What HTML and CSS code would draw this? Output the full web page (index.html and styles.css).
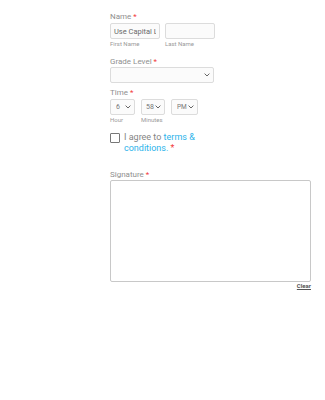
FILE: index.html
```html
<!DOCTYPE html>
<html lang="en">
<head>
    <meta charset="UTF-8">
    <meta name="viewport" content="width=device-width, initial-scale=1.0">
    <title>Form</title>
    <link rel="stylesheet" href="styles.css">
</head>
<body>
    <form class="form">
        <div class="field field-name">
            <label class="label">Name <span class="req">*</span></label>
            <div class="row">
                <div class="sub">
                    <input type="text" class="input input-half" value="Use Capital Letters">
                    <span class="sublabel">First Name</span>
                </div>
                <div class="sub">
                    <input type="text" class="input input-half">
                    <span class="sublabel">Last Name</span>
                </div>
            </div>
        </div>

        <div class="field field-grade">
            <label class="label">Grade Level <span class="req">*</span></label>
            <select class="select select-wide"><option></option></select>
        </div>

        <div class="field field-time">
            <label class="label">Time <span class="req">*</span></label>
            <div class="row time-row">
                <div class="sub">
                    <select class="select select-hour"><option>6</option></select>
                    <span class="sublabel">Hour</span>
                </div>
                <div class="sub">
                    <select class="select select-min"><option>58</option></select>
                    <span class="sublabel">Minutes</span>
                </div>
                <div class="sub">
                    <select class="select select-ampm"><option>PM</option></select>
                </div>
            </div>
        </div>

        <div class="field agree">
            <span class="checkbox"></span>
            <p class="agree-text">I agree to <a href="#" class="link">terms &amp;</a><br><a href="#" class="link">conditions.</a> <span class="req">*</span></p>
        </div>

        <div class="field">
            <label class="label">Signature <span class="req">*</span></label>
            <div class="signature"></div>
            <div class="clear-row"><a href="#" class="clear">Clear</a></div>
        </div>
    </form>
</body>
</html>
```

FILE: styles.css
```css
* {
    margin: 0;
    padding: 0;
    box-sizing: border-box;
    font-family: Roboto, 'Liberation Sans', Arial, sans-serif;
}

body {
    background-color: #fff;
}

.form {
    width: 201px;
    margin-left: 110px;
    padding-top: 12px;
}

.field-name {
    margin-bottom: 9px;
}

.field-grade {
    margin-bottom: 5px;
}

.field-time {
    margin-bottom: 8px;
}

.label {
    display: block;
    font-size: 8px;
    line-height: 10px;
    font-weight: 400;
    color: #8f8f8f;
}

.req {
    color: #f23a3c;
}

.row {
    display: flex;
    gap: 5px;
    margin-top: 1px;
}

.sub {
    display: flex;
    flex-direction: column;
}

.input {
    display: block;
    height: 16px;
    border: 1px solid #dcdcdc;
    border-radius: 2px;
    background-color: #fbfbfb;
    font-size: 7.5px;
    font-weight: 400;
    color: #6a6a6a;
    padding: 0 3px;
}

.input-half {
    width: 50px;
}

.sublabel {
    font-size: 6px;
    line-height: 8px;
    color: #9a9a9a;
    margin-top: 1px;
}

.select {
    display: block;
    appearance: none;
    height: 16px;
    border: 1px solid #dcdcdc;
    border-radius: 2px;
    background-color: #fbfbfb;
    font-size: 7px;
    color: #777;
    padding: 0 3px;
    background-image: url("data:image/svg+xml;utf8,<svg xmlns='http://www.w3.org/2000/svg' width='6' height='4' viewBox='0 0 6 4'><path d='M0.6 0.6 L3 3 L5.4 0.6' fill='none' stroke='%23666' stroke-width='1'/></svg>");
    background-repeat: no-repeat;
    background-position: right 3px center;
}

.select-wide {
    width: 104px;
}

.select-hour {
    width: 25px;
    padding-left: 5px;
}

.select-min {
    width: 24px;
    padding-left: 4px;
}

.select-ampm {
    width: 27px;
    padding-left: 5px;
    font-size: 6.5px;
}

.time-row {
    gap: 6px;
}

.agree {
    display: flex;
    align-items: flex-start;
    gap: 4px;
    margin-bottom: 16px;
}

.checkbox {
    flex: none;
    width: 10px;
    height: 10px;
    margin-top: 1px;
    border: 1px solid #777;
    border-radius: 1px;
}

.agree-text {
    font-size: 9px;
    line-height: 11px;
    color: #858585;
}

.link {
    color: #2bb3ea;
    text-decoration: none;
}

.signature {
    width: 201px;
    height: 102px;
    border: 1px solid #c8c8c8;
    border-radius: 2px;
}

.clear-row {
    display: flex;
    justify-content: flex-end;
}

.clear {
    font-size: 6px;
    font-weight: bold;
    color: #555;
    line-height: 8px;
    text-decoration: underline;
}
```
